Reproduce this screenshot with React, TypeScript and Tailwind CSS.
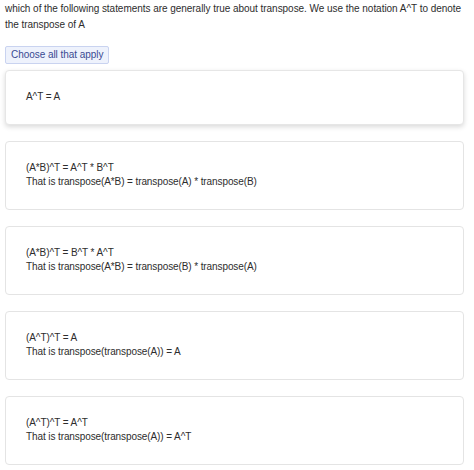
import React from "react";

const options: { id: string; lines: string[] }[] = [
  { id: "a", lines: ["A^T = A"] },
  { id: "b", lines: ["(A*B)^T = A^T * B^T", "That is transpose(A*B) = transpose(A) * transpose(B)"] },
  { id: "c", lines: ["(A*B)^T = B^T * A^T", "That is transpose(A*B) = transpose(B) * transpose(A)"] },
  { id: "d", lines: ["(A^T)^T = A", "That is transpose(transpose(A)) = A"] },
  { id: "e", lines: ["(A^T)^T = A^T", "That is transpose(transpose(A)) = A^T"] },
];

export default function App() {
  return (
    <div
      className="w-[474px] h-[470px] bg-white px-[5px] pt-px text-[#2d2d2d]"
      style={{ fontFamily: "'Liberation Sans', Arial, sans-serif" }}
    >
      <p className="text-[10px] leading-[16px] tracking-[-0.04px]">
        which of the following statements are generally true about transpose. We use the notation A^T to denote
        the transpose of A
      </p>

      <div className="mt-[13px] flex">
        <span className="border border-[#c9d3f0] bg-[#eef2fc] text-[#3a4a92] text-[10px] leading-[14px] px-[5px] py-px rounded-[2px] tracking-[-0.05px]">
          Choose all that apply
        </span>
      </div>

      <div className="mt-[6px] w-[459px] flex flex-col gap-[16px]">
        {options.map((o, i) => (
          <div
            key={o.id}
            className={
              i === 0
                ? "rounded-[4px] border border-[#e6e6e6] bg-white px-[20px] py-[19px] shadow-[0_2px_5px_rgba(0,0,0,0.15)]"
                : "rounded-[4px] border border-[#e4e4e4] bg-white px-[20px] py-[19px]"
            }
          >
            {o.lines.map((l) => (
              <p key={l} className="text-[10px] leading-[14.5px] tracking-[-0.1px] text-[#2d2d2d]">
                {l}
              </p>
            ))}
          </div>
        ))}
      </div>
    </div>
  );
}
